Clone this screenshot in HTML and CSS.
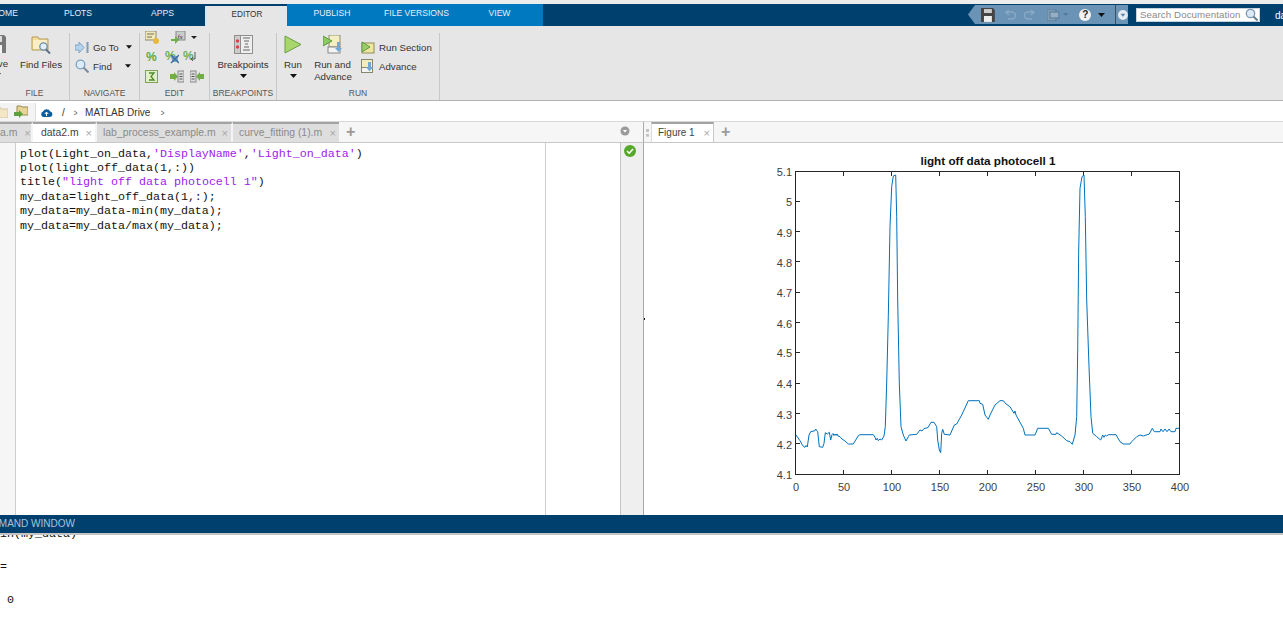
FILE: index.html
```html
<!DOCTYPE html>
<html lang="en">
<head>
<meta charset="utf-8">
<title>MATLAB Online</title>
<link rel="stylesheet" href="styles.css">
</head>
<body>
<div class="app">
  <header class="tabbar">
    <div class="tabs-main">
      <span class="rtab home">HOME</span>
      <span class="rtab w84">PLOTS</span>
      <span class="rtab w85">APPS</span>
    </div>
    <span class="rtab active">EDITOR</span>
    <div class="tabs-context">
      <span class="rtab w90">PUBLISH</span>
      <span class="rtab w79">FILE VERSIONS</span>
      <span class="rtab w87">VIEW</span>
    </div>
    <div class="bar-right">
      <div class="quick">
        <svg class="qi" width="14" height="14" viewBox="0 0 14 14"><path d="M0 0h12l2 2v12H0z" fill="#444"/><rect x="3" y="1" width="8" height="4" fill="#ccc"/><rect x="3" y="8" width="8" height="6" fill="#eee"/></svg>
        <svg class="qi q-undo" width="12" height="12" viewBox="0 0 12 12"><path d="M3 3h5a3 3 0 0 1 0 7H4M5 1 2 3l3 3" fill="none" stroke="#88a9c6" stroke-width="1.5"/></svg>
        <svg class="qi q-redo" width="12" height="12" viewBox="0 0 12 12"><path d="M9 3H4a3 3 0 0 0 0 7h4M7 1l3 2-3 3" fill="none" stroke="#88a9c6" stroke-width="1.5"/></svg>
        <svg class="qi q-layout" width="22" height="12" viewBox="0 0 22 12"><rect x="0" y="0" width="9" height="12" fill="#7f9cb5" stroke="#57799a"/><rect x="3" y="3" width="9" height="6" fill="#96aec3" stroke="#57799a"/><path d="M16 4h6l-3 3z" fill="#57799a"/></svg>
        <span class="help">?</span>
        <svg class="q-arrow" width="7" height="4" viewBox="0 0 7 4"><path d="M0 0h7L3.500 4z" fill="#111"/></svg>
        <span class="q-sep"></span>
        <svg class="q-set" width="10" height="10" viewBox="0 0 10 10"><circle cx="5" cy="5" r="5" fill="#e3ebf2"/><path d="M2.500 3.800h5L5 6.800z" fill="#5f86a8"/></svg>
      </div>
      <div class="search">
        <span>Search Documentation</span>
        <svg width="13" height="13" viewBox="0 0 13 13"><circle cx="5.500" cy="5.500" r="4.200" fill="#dbeaf6" stroke="#7d99b1" stroke-width="1.300"/><path d="m8.500 8.500 4 4" stroke="#6e7f8e" stroke-width="2"/></svg>
      </div>
      <span class="user">da</span>
    </div>
  </header>

  <section class="ribbon">
    <div class="group g-file">
      <div class="group-body">
        <div class="big save">
          <svg width="18" height="18" viewBox="0 0 18 18"><path d="M0 0h16l2 2v16H0z" fill="#777"/><rect x="4" y="1" width="10" height="6" fill="#ddd"/><rect x="4" y="10" width="10" height="8" fill="#f4f4f4"/></svg>
          <span class="big-label">Save</span>
          <svg class="caret" width="7" height="4" viewBox="0 0 7 4"><path d="M0 0h7L3.500 4z"/></svg>
        </div>
        <div class="big findfiles">
          <svg width="20" height="19" viewBox="0 0 20 19"><path d="M1 2h6l1 2h9v11H1z" fill="#f4dd9d" stroke="#b69a58"/><rect x="2" y="5" width="14" height="9" fill="#fbeec6"/><circle cx="12.500" cy="11.500" r="3.700" fill="#e2eff8" stroke="#6b8ba6" stroke-width="1.300"/><path d="m15 14.500 4 4" stroke="#5c7184" stroke-width="2"/></svg>
          <span class="big-label">Find Files</span>
        </div>
      </div>
      <div class="group-label">FILE</div>
    </div>
    <div class="group g-nav">
      <div class="group-body small-col">
        <div class="small">
          <svg width="14" height="13" viewBox="0 0 14 13"><path d="M0 4h4V1l5 5.500L4 12V9H0z" fill="#b5d3ec" stroke="#7ea6c9"/><path d="M12.500 1v11" stroke="#7d9dbb" stroke-width="2"/></svg>
          <span>Go To</span>
          <svg class="caret mini" width="6" height="4" viewBox="0 0 7 4"><path d="M0 0h7L3.500 4z"/></svg>
        </div>
        <div class="small">
          <svg width="14" height="14" viewBox="0 0 14 14"><circle cx="5.500" cy="5.500" r="4.300" fill="#dcecf8" stroke="#7ba0c0" stroke-width="1.300"/><path d="m8.500 8.500 5 5" stroke="#7a8b99" stroke-width="2"/></svg>
          <span>Find</span>
          <svg class="caret mini find-caret" width="6" height="4" viewBox="0 0 7 4"><path d="M0 0h7L3.500 4z"/></svg>
        </div>
      </div>
      <div class="group-label">NAVIGATE</div>
    </div>
    <div class="group g-edit">
      <div class="group-body edit-grid">
        <svg width="14" height="13" viewBox="0 0 14 13"><rect x="0" y="0" width="11" height="9" fill="#f3e9b8" stroke="#8a8a70"/><path d="M2 3h7M2 6h5" stroke="#6f6f60"/><circle cx="11" cy="10" r="3" fill="#e6b93e"/></svg>
        <svg class="span-wide" width="26" height="14" viewBox="0 0 26 14"><rect x="5" y="0" width="9" height="9" fill="#ccc" stroke="#888"/><text x="6.500" y="7.500" class="fx">fx</text><path d="M0 8h4V5l4 4-4 4v-3H0z" fill="#72ad4c"/><path d="M20 5h6l-3 3z" fill="#222"/></svg>
        <span class="pct">%</span>
        <svg width="14" height="14" viewBox="0 0 14 14"><text x="0" y="10" class="pct-svg">%</text><path d="M7 6h6v6H7z" fill="#6d9cc6" opacity=".85"/><path d="m6 5 8 8m0-8-8 8" stroke="#3d6f9e" stroke-width="1.500"/></svg>
        <svg class="e-wrap" width="14" height="14" viewBox="0 0 14 14"><text x="0" y="10" class="pct-svg">%</text><path d="M12 2v7H8m2-2-2 2 2 2" fill="none" stroke="#555"/></svg>
        <svg width="13" height="13" viewBox="0 0 13 13"><rect x=".5" y=".5" width="12" height="12" fill="#e3efc8" stroke="#7fa25b"/><path d="M4 3h5L6 6.500 9 10H4" fill="none" stroke="#4f8a37" stroke-width="1.300"/></svg>
        <svg class="e-shift" width="14" height="13" viewBox="0 0 14 13"><path d="M0 4h4V2l4 4.500L4 11V9H0z" fill="#72ad4c"/><rect x="8" y="1" width="6" height="11" fill="#ddd" stroke="#888"/><path d="M9.500 4h3M9.500 6.500h3M9.500 9h3" stroke="#555"/></svg>
        <svg class="e-shift" width="14" height="13" viewBox="0 0 14 13"><rect x="0" y="1" width="6" height="11" fill="#ddd" stroke="#888"/><path d="M1.500 4h3M1.500 6.500h3M1.500 9h3" stroke="#555"/><path d="M14 4h-4V2L6 6.500 10 11V9h4z" fill="#72ad4c"/></svg>
      </div>
      <div class="group-label">EDIT</div>
    </div>
    <div class="group g-break">
      <div class="group-body">
        <div class="big bp">
          <svg width="19" height="19" viewBox="0 0 19 19"><rect x=".5" y=".5" width="18" height="18" fill="#eee" stroke="#8f8f8f"/><rect x=".5" y=".5" width="6" height="18" fill="#ccc" stroke="#8f8f8f"/><circle cx="3.500" cy="6" r="1.700" fill="#d4444a"/><circle cx="3.500" cy="12" r="1.700" fill="#d4444a"/><path d="M9 3h7M10 6h5M11 9h3M10 12h5M9 15h7" stroke="#666"/></svg>
          <span class="big-label">Breakpoints</span>
          <svg class="caret" width="7" height="4" viewBox="0 0 7 4"><path d="M0 0h7L3.500 4z"/></svg>
        </div>
      </div>
      <div class="group-label">BREAKPOINTS</div>
    </div>
    <div class="group g-run">
      <div class="group-body">
        <div class="big run">
          <svg width="18" height="19" viewBox="0 0 18 19"><path d="M1 1 17 9.500 1 18z" fill="#a9d66c" stroke="#6a9f45"/></svg>
          <span class="big-label">Run</span>
          <svg class="caret" width="7" height="4" viewBox="0 0 7 4"><path d="M0 0h7L3.500 4z"/></svg>
        </div>
        <div class="big runadv">
          <svg width="20" height="19" viewBox="0 0 20 19"><rect x="6" y="0" width="11" height="12" fill="#f4efc2" stroke="#8d8d75"/><path d="M0 1 9 6 0 11z" fill="#8ccb62" stroke="#5f9840"/><rect x="5" y="12" width="12" height="6" fill="#f4f4f4" stroke="#888"/><path d="M14 7v6h-2l3.500 4 3.500-4h-2V7z" fill="#6fa7d6"/></svg>
          <span class="big-label">Run and<br>Advance</span>
        </div>
        <div class="small-col run-small">
          <div class="small">
            <svg width="14" height="13" viewBox="0 0 14 13"><rect x="1" y="2" width="12" height="10" fill="#f0e59c" stroke="#8d8d60"/><path d="M1 1 9 6 1 11z" fill="#9ccf6a" stroke="#5f9840"/></svg>
            <span>Run Section</span>
          </div>
          <div class="small">
            <svg width="14" height="14" viewBox="0 0 14 14"><rect x=".5" y=".5" width="11" height="8" fill="#f3ecbd" stroke="#858570"/><rect x=".5" y="8.500" width="11" height="5" fill="#f4f4f4" stroke="#858570"/><path d="M7 3v5H5l3.500 4.500L12 8h-2V3z" fill="#6fa7d6"/></svg>
            <span>Advance</span>
          </div>
        </div>
      </div>
      <div class="group-label">RUN</div>
    </div>
  </section>

  <nav class="address">
    <div class="addr-tools">
      <svg class="faint" width="13" height="12" viewBox="0 0 13 12"><path d="M0 1h5l1 2h7v9H0z" fill="#f3e7c8" stroke="#d6c7a3"/></svg>
      <svg width="14" height="14" viewBox="0 0 14 14"><path d="M3 1h4l1 1h6v8H3z" fill="#e8d595" stroke="#9a8a50"/><path d="M0 5h5V3l4 4-4 4V9H0z" transform="translate(0 2)" fill="#5ea13c"/></svg>
    </div>
    <div class="addr-path">
      <svg width="13" height="10" viewBox="0 0 13 10"><path d="M3 9a3 3 0 0 1 0-5.500 4 4 0 0 1 7.300 0A2.800 2.800 0 0 1 10 9z" fill="#0e5e9c"/><path d="M6.500 8V4.500M4.800 6l1.700-2 1.700 2" stroke="#fff" fill="none"/></svg>
      <span class="crumb-root">/</span>
      <span class="chev">&gt;</span>
      <span class="crumb">MATLAB Drive</span>
      <span class="chev">&gt;</span>
    </div>
  </nav>

  <main class="workspace">
    <section class="editor-pane">
      <div class="doc-tabs">
        <span class="dtab d-first">a.m<i>×</i></span>
        <span class="dtab d-active">data2.m<i>×</i></span>
        <span class="dtab d-lab">lab_process_example.m<i>×</i></span>
        <span class="dtab d-curve">curve_fitting (1).m<i>×</i></span>
        <span class="plus">+</span>
        <svg class="pane-menu" width="10" height="10" viewBox="0 0 10 10"><circle cx="5" cy="5" r="4.500" fill="#9b9b9b"/><path d="M2.800 4h4.400L5 6.500z" fill="#fff"/></svg>
      </div>
      <div class="editor">
        <div class="gutter"></div>
        <pre class="code">plot(Light_on_data,<b>'DisplayName'</b>,<b>'Light_on_data'</b>)
plot(light_off_data(1,:))
title(<b>"light off data photocell 1"</b>)
my_data=light_off_data(1,:);
my_data=my_data-min(my_data);
my_data=my_data/max(my_data);</pre>
        <div class="margin-area"></div>
        <div class="status">
          <svg width="12" height="12" viewBox="0 0 12 12"><circle cx="6" cy="6" r="6" fill="#55a82a"/><path d="m3 6 2.200 2.200L9 4" fill="none" stroke="#fff" stroke-width="1.600"/></svg>
        </div>
      </div>
    </section>
    <section class="figure-pane">
      <div class="fig-tabs">
        <span class="grip"></span>
        <span class="ftab">Figure 1<i>×</i></span>
        <span class="plus">+</span>
      </div>
      <div class="figure">
        <svg class="plot" width="639" height="372" viewBox="644 143 639 372">
          <g class="ticks">
            <path d="M795.500 172v4M843.500 172v4M891.500 172v4M939.500 172v4M987.500 172v4M1035.500 172v4M1083.500 172v4M1131.500 172v4"/>
            <path d="M795.500 474v-4M843.500 474v-4M891.500 474v-4M939.500 474v-4M987.500 474v-4M1035.500 474v-4M1083.500 474v-4M1131.500 474v-4"/>
            <path d="M796 201.500h4M796 231.500h4M796 261.500h4M796 292.500h4M796 322.500h4M796 352.500h4M796 383.500h4M796 413.500h4M796 443.500h4"/>
            <path d="M1179 201.500h-4M1179 231.500h-4M1179 261.500h-4M1179 292.500h-4M1179 322.500h-4M1179 352.500h-4M1179 383.500h-4M1179 413.500h-4M1179 443.500h-4"/>
          </g>
          <rect class="axes" x="795.500" y="171.500" width="384" height="303"/>
          <polyline class="line" points="796,435 800,440.700 802.700,445.700 805,447.300 806,445.500 807.300,447 809,435 810.700,431.700 815,430.700 815.800,429 816.700,430.500 817.700,431.700 819.300,446.700 822.700,447.300 824,443.300 825.300,432.700 827.300,434 829.300,432.300 830.700,440 832,434.700 833,433.500 834,435.500 835,434 836,435.500 837,434 838,436 840,436.700 842,439 845,441 848.300,444 853.300,444 858.300,435.700 860,434.700 873.300,434.700 875,437.300 876,440 877.300,438.300 878.300,440.700 880,439 881.700,440 884,436 885.300,426.700 886.700,383 888.300,316.700 890,226.700 891.700,186.700 893.300,176 895.700,175 896.700,216.700 897.700,300 899.300,383 901,426.700 903.300,435 906,441 908.300,436.700 909.300,435 916.700,434.300 920,430 922,431 924,428.500 926.700,428 928,427.500 931,422.300 934,422.300 936.700,426.700 937.700,440 939.300,450 940.700,452.700 941.700,433.300 942.700,429.300 944.300,434.300 950,435 954.300,425 956.700,424 961.700,415 968.300,400.700 979.300,400.700 980,403.300 982.700,404.300 985,415 988.300,419.300 990,415 995,405 1000,400.700 1003.300,400.700 1006,404 1010,406.700 1014,413.300 1015,411 1016,415 1023.300,428.300 1025,435 1035,435 1037.700,428.300 1048.300,428.300 1051.700,434.300 1056,434.300 1056.700,432.700 1061.700,436 1066.700,440.700 1070,441.700 1072.300,444.300 1075,435 1076.700,416.700 1077.700,350 1078.700,250 1080,188.300 1082,176.700 1084,175 1085.300,216.700 1086.700,300 1089,366.700 1091,416.700 1092.700,433.300 1096.700,436.700 1100.700,440 1102.700,435 1104,437.300 1105.300,435 1106.700,436 1108.300,434.700 1116,434.700 1120,441.700 1123.300,444 1130,444 1131.700,441.700 1136.700,436.700 1140,435 1143.300,436 1149.300,434 1152.300,428.300 1154.300,431.700 1160,431.700 1161,429 1163,431.700 1165,429 1167,431.700 1169,429 1171,431.700 1175,431.700 1176,428.300 1179,428.300"/>
          <text class="title" x="988" y="165">light off data photocell 1</text>
          <g class="ylab">
            <text x="792" y="176">5.1</text><text x="792" y="206">5</text><text x="792" y="237">4.9</text><text x="792" y="267">4.8</text><text x="792" y="297">4.7</text><text x="792" y="328">4.6</text><text x="792" y="357">4.5</text><text x="792" y="388">4.4</text><text x="792" y="419">4.3</text><text x="792" y="449">4.2</text><text x="792" y="479">4.1</text>
          </g>
          <g class="xlab">
            <text x="796" y="491">0</text><text x="844" y="491">50</text><text x="892" y="491">100</text><text x="940" y="491">150</text><text x="988" y="491">200</text><text x="1036" y="491">250</text><text x="1084" y="491">300</text><text x="1132" y="491">350</text><text x="1180" y="491">400</text>
          </g>
        </svg>
        <span class="cursor-dot"></span>
      </div>
    </section>
  </main>

  <div class="cmd-title">COMMAND WINDOW</div>
  <div class="cmd-wrap">
    <pre class="cmd">&gt;&gt; min(my_data)

ans =

     0</pre>
  </div>
</div>
</body>
</html>
```

FILE: styles.css
```css
* { box-sizing: border-box; }
html, body { margin: 0; height: 100%; overflow: hidden; background: #fff; }
body { font-family: "Liberation Sans", Arial, sans-serif; font-size: 10px; color: #333; }
.app { width: 1283px; height: 629px; display: flex; flex-direction: column; overflow: hidden; }

/* top tab strip */
.tabbar { height: 26px; border-top: 4px solid #ececec; background: #00406f; display: flex; align-items: stretch; flex: none; overflow: hidden; }
.tabbar > * { flex: none; }
.tabs-main { display: flex; margin-left: -26px; }
.tabs-context { display: flex; background: #0079c1; }
.rtab { display: flex; flex: none; align-items: center; justify-content: center; color: #e6eef5; font-size: 8.600px; height: 22px; padding-bottom: 5px; }
.home { width: 62px; }
.w84 { width: 84px; }
.w85 { width: 85px; }
.w90 { width: 90px; }
.w79 { width: 79px; }
.w87 { width: 87px; }
.rtab.active { width: 82px; margin-top: 2px; height: 20px; background: #e6e6e6; color: #333; padding-bottom: 3px; border-left: 2px solid #d4e6f3; font-size: 8.200px; }
.bar-right { margin-left: 425px; display: flex; align-items: center; height: 22px; }
.bar-right > * { flex: none; }
.quick { width: 160px; height: 19px; margin-top: -1px; background: #6a93b6; display: flex; align-items: center; padding-left: 13px; clip-path: polygon(7px 0, 100% 0, 100% 100%, 7px 100%, 0 50%); }
.q-undo { margin-left: 9px; }
.q-redo { margin-left: 8px; }
.q-layout { margin-left: 11px; }
.help { width: 12px; height: 12px; margin-left: 11px; border-radius: 50%; background: #f2f2f2; color: #222; font-size: 10px; font-weight: bold; line-height: 12px; text-align: center; }
.q-arrow { margin-left: 7px; }
.q-sep { width: 1px; height: 19px; margin-left: 10px; background: #3a4f62; }
.q-set { margin-left: 2px; }
.search { width: 124px; height: 14px; margin-left: 8px; margin-top: -1px; background: #fff; border: 1px solid #c6d3de; display: flex; align-items: center; justify-content: space-between; padding: 0 1px 0 3px; color: #8a8a8a; font-size: 9.700px; letter-spacing: .1px; }
.user { margin-left: 15px; color: #fff; font-size: 10px; }

/* ribbon */
.ribbon { height: 75px; flex: none; background: #e6e6e6; border-bottom: 1px solid #b3b3b3; display: flex; }
.group { display: flex; flex-direction: column; margin-top: 7px; height: 67px; border-right: 1px solid #c8c8c8; }
.group-body { flex: 1; display: flex; min-height: 0; }
.group-label { height: 14px; line-height: 14px; text-align: center; color: #555; font-size: 8.500px; }
.g-file { width: 70px; }
.g-nav { width: 70px; }
.g-edit { width: 70px; }
.g-break { width: 67px; }
.g-run { width: 163px; }
.big { display: flex; flex-direction: column; align-items: center; padding-top: 2px; color: #333; }
.big-label { margin-top: 5px; line-height: 12px; white-space: nowrap; font-size: 9.700px; }
.caret { fill: #111; margin-top: 3px; }
.save { width: 36px; margin-left: -21px; }
.findfiles { width: 50px; margin-left: 1px; }
.small-col { display: flex; flex-direction: column; gap: 5px; padding: 7px 0 0 5px; }
.small { display: flex; align-items: center; gap: 4px; height: 14px; white-space: nowrap; font-size: 9.700px; color: #333; }
.mini { margin: 0 0 0 3px; }
.find-caret { margin-left: 9px; }
.edit-grid { display: grid; grid-template-columns: 20px 20px 20px; grid-auto-rows: 19.500px; padding: 0 0 0 5px; align-items: center; justify-items: start; margin-top: -5px; }
.span-wide { grid-column: 2 / span 2; margin-left: 6px; }
.e-wrap { margin-left: -2px; }
.e-shift { margin-left: 5px; }
.pct { color: #5fa83f; font-size: 12px; font-weight: bold; margin-left: 1px; }
.pct-svg { fill: #6fae46; font: bold 12px "Liberation Sans", sans-serif; }
.fx { font: italic 7px "Liberation Serif", serif; fill: #333; }
.bp { width: 66px; }
.run { width: 30px; margin-left: 1px; }
.runadv { width: 50px; margin-left: 0; }
.run-small { padding-left: 3px; }

/* address bar */
.address { height: 21px; flex: none; padding-top: 2px; border-bottom: 1px solid #d8d8d8; display: flex; background: #fff; }
.addr-tools { width: 41px; display: flex; align-items: center; gap: 6px; margin-left: -5px; background: #f3f3f3; border-right: 1px solid #ddd; }
.addr-path { display: flex; align-items: center; padding: 1px 0 0 4px; color: #333; font-size: 10px; }
.crumb-root { margin-left: 9px; }
.chev { color: #555; margin-left: 8px; font-size: 9px; transform: scaleX(.7); }
.crumb { margin-left: 7px; }
.addr-path .chev:last-child { margin-left: 10px; }

/* panes */
.workspace { display: flex; height: 393px; flex: none; }
.editor-pane { width: 644px; display: flex; flex-direction: column; flex: none; }
.doc-tabs { height: 21px; display: flex; align-items: stretch; background: #f6f6f6; border-bottom: 1px solid #c8c8c8; border-right: 1px solid #aaa; position: relative; flex: none; }
.dtab { display: flex; align-items: center; justify-content: space-between; background: #dedede; border-top: 2px solid #a3a3a3; border-right: 2px solid #f4f4f4; color: #8a8a8a; font-size: 10.400px; white-space: nowrap; padding-bottom: 1px; }
.dtab i { font-style: normal; color: #a8a8a8; font-size: 11px; }
.d-first { width: 33px; justify-content: flex-start; gap: 7px; padding-left: 0; }
.d-active { width: 64px; background: #fff; color: #444; padding: 0 3px 1px 8px; }
.d-lab { width: 136px; padding: 0 3px 1px 6px; }
.d-curve { width: 106px; padding: 0 3px 1px 6px; border-right: 0; }
.plus { color: #9a9a9a; font-size: 16px; line-height: 19px; margin-left: 7px; font-weight: bold; }
.pane-menu { position: absolute; left: 620px; top: 4px; }
.editor { flex: 1; display: flex; min-height: 0; }
.gutter { width: 16px; background: #f6f6f6; border-right: 1px solid #cfcfcf; flex: none; }
.code { width: 529px; flex: none; margin: 0; padding: 3.600px 0 0 4px; font-family: "Liberation Mono", "Courier New", monospace; font-size: 11.670px; line-height: 14.400px; color: #111; }
.code b { font-weight: normal; color: #a020f0; }
.margin-area { width: 75px; flex: none; border-left: 1px solid #cfcfcf; }
.status { width: 24px; flex: none; background: #efefef; border-left: 1px solid #c4c4c4; border-right: 1px solid #a9a9a9; display: flex; justify-content: center; padding: 2px 4px 0 0; }
.figure-pane { flex: 1; display: flex; flex-direction: column; min-width: 0; }
.fig-tabs { height: 21px; display: flex; align-items: stretch; background: #f6f6f6; border-bottom: 1px solid #c8c8c8; flex: none; }
.grip { width: 3px; height: 8px; margin: 7px 0 0 2px; border-left: 3px dotted #c4c4c4; }
.ftab { width: 63px; margin-left: 2px; display: flex; align-items: center; justify-content: space-between; background: #fff; border-top: 2px solid #a3a3a3; border-left: 1px solid #dcdcdc; border-right: 1px solid #c8c8c8; padding: 0 3px 1px 6px; color: #444; font-size: 10px; white-space: nowrap; }
.ftab i { font-style: normal; color: #a8a8a8; font-size: 11px; }
.figure { flex: 1; position: relative; overflow: hidden; background: #fff; }
.plot { display: block; }
.cursor-dot { position: absolute; left: 0; top: 175px; width: 1px; height: 2px; background: #111; }
.axes { fill: none; stroke: #262626; stroke-width: 1; }
.ticks { fill: none; stroke: #262626; stroke-width: 1; }
.line { fill: none; stroke: #0072bd; stroke-width: 1; stroke-linejoin: round; }
.title { font: bold 11.700px "Liberation Sans", sans-serif; fill: #111; text-anchor: middle; }
.ylab text { font: 11px "Liberation Sans", sans-serif; fill: #404040; text-anchor: end; }
.xlab text { font: 11px "Liberation Sans", sans-serif; fill: #404040; text-anchor: middle; }

/* command window */
.cmd-title { height: 20px; flex: none; margin-left: -24.500px; width: 1308px; background: #00406f; border-bottom: 2px solid #c4c4c4; color: #a9c3d8; font-size: 10px; line-height: 18px; }
.cmd-wrap { flex: 1; overflow: hidden; min-height: 0; }
.cmd { margin: -9px 0 0 -28px; font-family: "Liberation Mono", "Courier New", monospace; font-size: 11.670px; line-height: 16.500px; color: #111; }
```
